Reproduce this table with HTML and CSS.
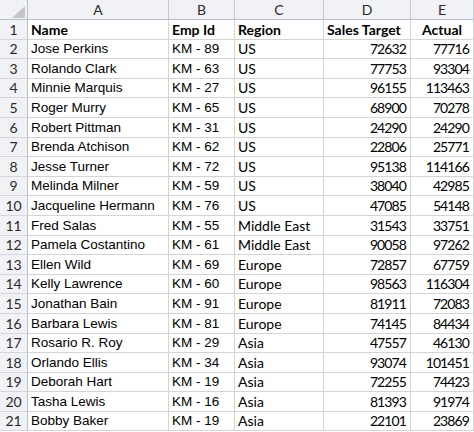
FILE: index.html
```html
<!DOCTYPE html>
<html>
<head>
<meta charset="utf-8">
<link rel="stylesheet" href="styles.css">
</head>
<body>
<div class="sheet">
  <div class="corner"><span class="tri"></span></div>
  <div class="colhead">A</div>
  <div class="colhead">B</div>
  <div class="colhead">C</div>
  <div class="colhead">D</div>
  <div class="colhead">E</div>

  <div class="rowhead">1</div>
  <div class="cell hd">Name</div>
  <div class="cell hd">Emp Id</div>
  <div class="cell hd">Region</div>
  <div class="cell hd">Sales Target</div>
  <div class="cell hd center">Actual</div>

  <div class="rowhead">2</div><div class="cell name">Jose Perkins</div><div class="cell emp">KM - 89</div><div class="cell reg">US</div><div class="cell num">72632</div><div class="cell num">77716</div>
  <div class="rowhead">3</div><div class="cell name">Rolando Clark</div><div class="cell emp">KM - 63</div><div class="cell reg">US</div><div class="cell num">77753</div><div class="cell num">93304</div>
  <div class="rowhead">4</div><div class="cell name">Minnie Marquis</div><div class="cell emp">KM - 27</div><div class="cell reg">US</div><div class="cell num">96155</div><div class="cell num">113463</div>
  <div class="rowhead">5</div><div class="cell name">Roger Murry</div><div class="cell emp">KM - 65</div><div class="cell reg">US</div><div class="cell num">68900</div><div class="cell num">70278</div>
  <div class="rowhead">6</div><div class="cell name">Robert Pittman</div><div class="cell emp">KM - 31</div><div class="cell reg">US</div><div class="cell num">24290</div><div class="cell num">24290</div>
  <div class="rowhead">7</div><div class="cell name">Brenda Atchison</div><div class="cell emp">KM - 62</div><div class="cell reg">US</div><div class="cell num">22806</div><div class="cell num">25771</div>
  <div class="rowhead">8</div><div class="cell name">Jesse Turner</div><div class="cell emp">KM - 72</div><div class="cell reg">US</div><div class="cell num">95138</div><div class="cell num">114166</div>
  <div class="rowhead">9</div><div class="cell name">Melinda Milner</div><div class="cell emp">KM - 59</div><div class="cell reg">US</div><div class="cell num">38040</div><div class="cell num">42985</div>
  <div class="rowhead">10</div><div class="cell name">Jacqueline Hermann</div><div class="cell emp">KM - 76</div><div class="cell reg">US</div><div class="cell num">47085</div><div class="cell num">54148</div>
  <div class="rowhead">11</div><div class="cell name">Fred Salas</div><div class="cell emp">KM - 55</div><div class="cell reg">Middle East</div><div class="cell num">31543</div><div class="cell num">33751</div>
  <div class="rowhead">12</div><div class="cell name">Pamela Costantino</div><div class="cell emp">KM - 61</div><div class="cell reg">Middle East</div><div class="cell num">90058</div><div class="cell num">97262</div>
  <div class="rowhead">13</div><div class="cell name">Ellen Wild</div><div class="cell emp">KM - 69</div><div class="cell reg">Europe</div><div class="cell num">72857</div><div class="cell num">67759</div>
  <div class="rowhead">14</div><div class="cell name">Kelly Lawrence</div><div class="cell emp">KM - 60</div><div class="cell reg">Europe</div><div class="cell num">98563</div><div class="cell num">116304</div>
  <div class="rowhead">15</div><div class="cell name">Jonathan Bain</div><div class="cell emp">KM - 91</div><div class="cell reg">Europe</div><div class="cell num">81911</div><div class="cell num">72083</div>
  <div class="rowhead">16</div><div class="cell name">Barbara Lewis</div><div class="cell emp">KM - 81</div><div class="cell reg">Europe</div><div class="cell num">74145</div><div class="cell num">84434</div>
  <div class="rowhead">17</div><div class="cell name">Rosario R. Roy</div><div class="cell emp">KM - 29</div><div class="cell reg">Asia</div><div class="cell num">47557</div><div class="cell num">46130</div>
  <div class="rowhead">18</div><div class="cell name">Orlando Ellis</div><div class="cell emp">KM - 34</div><div class="cell reg">Asia</div><div class="cell num">93074</div><div class="cell num">101451</div>
  <div class="rowhead">19</div><div class="cell name">Deborah Hart</div><div class="cell emp">KM - 19</div><div class="cell reg">Asia</div><div class="cell num">72255</div><div class="cell num">74423</div>
  <div class="rowhead">20</div><div class="cell name">Tasha Lewis</div><div class="cell emp">KM - 16</div><div class="cell reg">Asia</div><div class="cell num">81393</div><div class="cell num">91974</div>
  <div class="rowhead">21</div><div class="cell name">Bobby Baker</div><div class="cell emp">KM - 19</div><div class="cell reg">Asia</div><div class="cell num">22101</div><div class="cell num">23869</div>
</div>
</body>
</html>
```

FILE: styles.css
```css
html, body {
  margin: 0;
  padding: 0;
  background: #ffffff;
}

.sheet {
  display: grid;
  grid-template-columns: 28px 141px 66px 89px 87px 63px;
  grid-template-rows: 20px;
  grid-auto-rows: 19.6px;
  width: 474px;
  overflow: hidden;
  font-family: Lato, "Open Sans", sans-serif;
  font-size: 14px;
  color: #000;
}

.sheet > div {
  box-sizing: border-box;
  display: flex;
  align-items: flex-end;
  line-height: 16px;
  white-space: nowrap;
  overflow: hidden;
}

.corner {
  background: #f1f2f6;
  border-right: 1px solid #b9bdc6;
  border-bottom: 1px solid #b9bdc6;
  justify-content: flex-end;
  padding: 0 2px 1px 0;
}

.tri {
  width: 13px;
  height: 12px;
  background: #c4c4c4;
  clip-path: polygon(100% 0, 100% 100%, 0 100%);
}

.colhead {
  background: #f1f2f6;
  border-right: 1px solid #c9ccd4;
  border-bottom: 1px solid #b9bdc6;
  justify-content: center;
  color: #2a2a2a;
  padding-bottom: 1px;
}

.rowhead {
  background: #f1f2f6;
  border-right: 1px solid #b9bdc6;
  border-bottom: 1px solid #d5d7dd;
  justify-content: center;
  color: #2a2a2a;
  padding-bottom: 1px;
}

.cell {
  border-right: 1px solid #d4d4d4;
  border-bottom: 1px solid #d4d4d4;
  padding: 0 3px 1px 3px;
}

.hd {
  font-weight: 700;
}

.center {
  justify-content: center;
}

.name, .emp {
  font-family: "Liberation Sans", Arial, sans-serif;
  font-size: 13.5px;
}

.emp {
  padding-left: 3px;
}

.num {
  justify-content: flex-end;
  letter-spacing: -0.9px;
  padding-right: 4px;
}
```
